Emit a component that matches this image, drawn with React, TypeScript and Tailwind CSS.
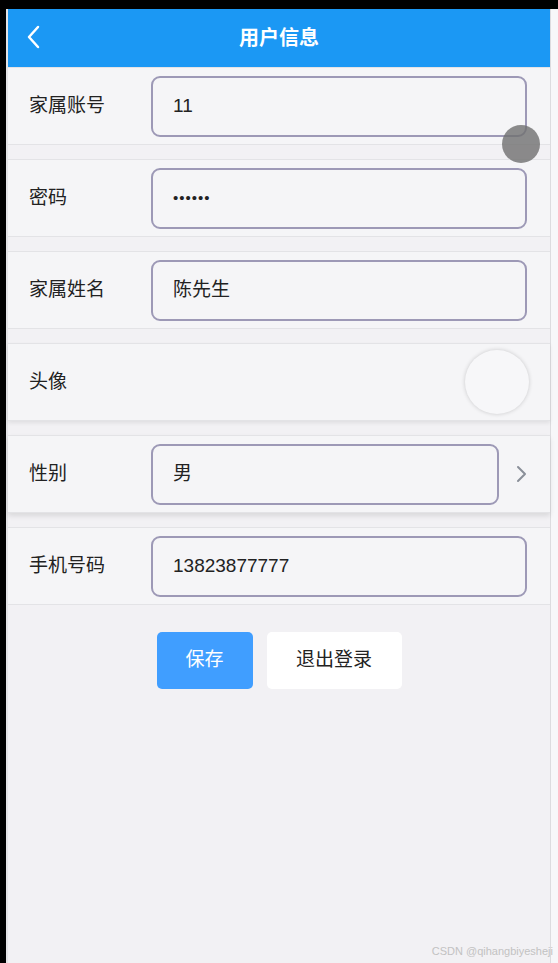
import React from 'react'

const font = { fontFamily: '"Liberation Sans", "Noto Sans CJK SC", sans-serif' }

interface Field {
  label: string
  value: string
  arrow?: boolean
  small?: boolean
}

function FieldRow({ label, value, arrow, small }: Field) {
  return (
    <div className="flex h-[78px] items-center border-y border-[#e3e3e6] bg-[#f5f5f7] pl-[21px] pr-[23px]">
      <div className="w-[122px] text-[19px] text-[#222]">{label}</div>
      <div
        className={
          small
            ? 'flex h-[61px] flex-1 items-center rounded-[9px] border-2 border-[#9d99b6] pl-5 text-[15px] tracking-[1px] text-[#222]'
            : 'flex h-[61px] flex-1 items-center rounded-[9px] border-2 border-[#9d99b6] pl-5 text-[19px] text-[#222]'
        }
      >
        {value}
      </div>
      {arrow && (
        <svg className="ml-[17px] mr-[-1px] h-5 w-3" viewBox="0 0 12 20" fill="none">
          <path d="M2 3l7 7-7 7" stroke="#8a8f99" strokeWidth={2} strokeLinecap="round" strokeLinejoin="round" />
        </svg>
      )}
    </div>
  )
}

export default function App() {
  return (
    <div className="relative h-[963px] w-[558px] overflow-hidden bg-black pl-[6px] pt-[9px]" style={font}>
      <div className="flex h-[954px] bg-[#f3f2f5]">
        <div className="w-[2px] bg-[#e4e4e7]" />
        <div className="relative flex w-[542px] flex-col bg-[#f2f1f4]">
          {/* header */}
          <div className="relative flex h-[58px] items-center justify-center bg-[#1b98f4]">
            <svg className="absolute left-[17px] top-[16px] h-[24px] w-[16px]" viewBox="0 0 16 24" fill="none">
              <path d="M13 2L4 12l9 10" stroke="white" strokeWidth={2.5} strokeLinecap="round" strokeLinejoin="round" />
            </svg>
            <span className="text-[20px] font-bold text-white">用户信息</span>
          </div>

          <div className="flex flex-col gap-[14px]">
            <FieldRow label="家属账号" value="11" />
            <FieldRow label="密码" value="••••••" small />
            <FieldRow label="家属姓名" value="陈先生" />
            <div className="flex h-[78px] items-center justify-between border-y border-[#e3e3e6] bg-[#f5f5f7] pl-[21px] pr-[21px] shadow-[0_2px_4px_rgba(0,0,0,0.08)]">
              <div className="text-[19px] text-[#222]">头像</div>
              <div className="h-[64px] w-[64px] rounded-full bg-[#f7f7f9] shadow-[0_0_4px_rgba(0,0,0,0.18)]" />
            </div>
            <div className="shadow-[0_3px_5px_rgba(0,0,0,0.1)]">
              <FieldRow label="性别" value="男" arrow />
            </div>
            <FieldRow label="手机号码" value="13823877777" />
          </div>

          <div className="mt-[27px] flex justify-center gap-[14px]">
            <button className="flex h-[57px] w-[96px] items-center justify-center rounded-[5px] bg-[#409eff] text-[19px] text-white">
              保存
            </button>
            <button className="flex h-[57px] w-[135px] items-center justify-center rounded-[5px] bg-white text-[19px] text-[#222]">
              退出登录
            </button>
          </div>

          {/* touch indicator */}
          <div className="absolute left-[494px] top-[116px] h-[38px] w-[38px] rounded-full bg-[#6f6f6f]/80" />
        </div>
        <div className="flex-1 border-l border-[#dcdcdf] bg-[#f7f7f9]" />
      </div>
      <div className="absolute bottom-[4px] right-[5px] text-[11px] text-[#c2c2c2]">CSDN @qihangbiyesheji</div>
    </div>
  )
}
